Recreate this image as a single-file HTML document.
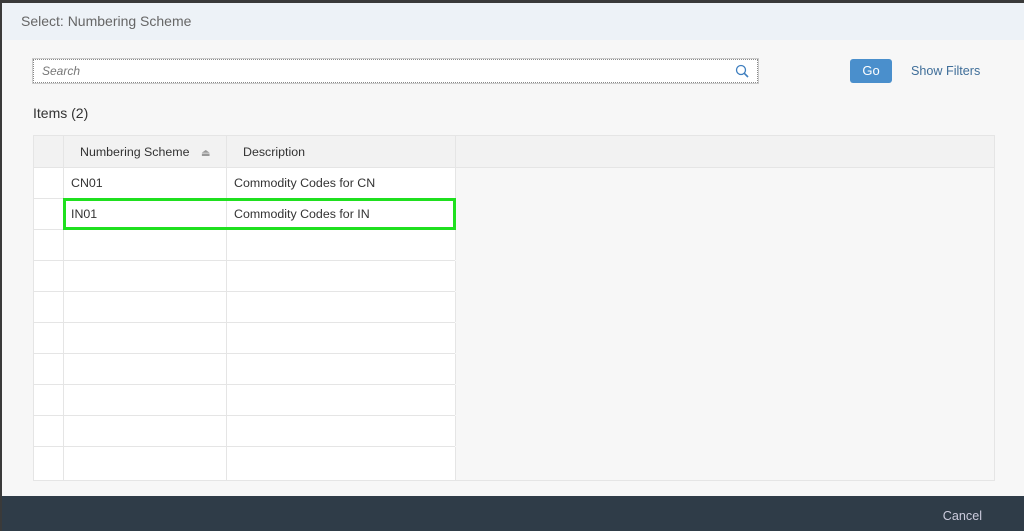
<!DOCTYPE html>
<html><head><style>
*{box-sizing:border-box;margin:0;padding:0}
body{width:1024px;height:531px;background:#3a3a3a;font-family:"Liberation Sans",sans-serif;position:relative;overflow:hidden}
.dlg{position:absolute;left:2px;top:3px;right:0;bottom:0;background:#f7f7f7}
.hdr{position:absolute;left:0;top:0;right:0;height:37px;background:#edf2f7;color:#666;font-size:14px;line-height:37px;padding-left:19px}
.search{position:absolute;left:31px;top:56px;width:725px;height:24px;background:#fff;border:1px dotted #888;outline:1px solid #ccc}
.search span{position:absolute;left:8px;top:4px;font-size:12px;font-style:italic;color:#777}
.go{position:absolute;left:848px;top:56px;width:42px;height:24px;background:#4a8fcc;border-radius:3px;color:#fff;font-size:13px;text-align:center;line-height:24px}
.sf{position:absolute;left:909px;top:61px;color:#3f6e99;font-size:12.6px}
.items{position:absolute;left:31px;top:102px;font-size:14px;color:#333}
.tbl{position:absolute;left:31px;top:132px;width:962px;height:346px;border:1px solid #e5e5e5;background:#f7f7f7}
.row{position:absolute;left:0;height:31px;width:421px;background:#fff;border-bottom:1px solid #e5e5e5;font-size:12.4px;color:#333}
.c{position:absolute;top:0;height:100%;border-right:1px solid #e5e5e5;line-height:31px;padding-left:7px}
.thd{position:absolute;left:0;top:0;width:960px;height:32px;background:#f2f2f2;border-bottom:1px solid #e5e5e5;font-size:12.4px;color:#333}
.foot{position:absolute;left:0;right:0;bottom:0;height:35px;background:#2f3c48;color:#ccd;font-size:12.6px}
.green{position:absolute;left:63px;top:198px;width:393px;height:32px;border:3px solid #1fe01f}
</style></head><body>
<div class="dlg">
<div class="hdr">Select: Numbering Scheme</div>
<div class="search"><span>Search</span>
<svg style="position:absolute;right:8px;top:4px" width="14" height="14" viewBox="0 0 14 14"><circle cx="6" cy="6" r="4.5" fill="none" stroke="#3f7fbf" stroke-width="1.3"/><path d="M9.3 9.3L13 13" stroke="#3f7fbf" stroke-width="1.6"/></svg></div>
<div class="go">Go</div>
<div class="sf">Show Filters</div>
<div class="items">Items (2)</div>
<div class="tbl">
<div class="thd">
<div class="c" style="left:0;width:30px"></div>
<div class="c" style="left:30px;width:163px;padding-left:16px;line-height:32px">Numbering Scheme <span style="margin-left:8px;color:#999;font-size:10px">&#9167;</span></div>
<div class="c" style="left:193px;width:229px;padding-left:16px;line-height:32px">Description</div>
</div>
<div class="row" style="top:32px"><div class="c" style="left:0;width:30px"></div><div class="c" style="left:30px;width:163px">CN01</div><div class="c" style="left:193px;width:229px">Commodity Codes for CN</div></div>
<div class="row" style="top:63px"><div class="c" style="left:0;width:30px"></div><div class="c" style="left:30px;width:163px">IN01</div><div class="c" style="left:193px;width:229px">Commodity Codes for IN</div></div>
<div class="row" style="top:94px"><div class="c" style="left:0;width:30px"></div><div class="c" style="left:30px;width:163px"></div><div class="c" style="left:193px;width:229px"></div></div>
<div class="row" style="top:125px"><div class="c" style="left:0;width:30px"></div><div class="c" style="left:30px;width:163px"></div><div class="c" style="left:193px;width:229px"></div></div>
<div class="row" style="top:156px"><div class="c" style="left:0;width:30px"></div><div class="c" style="left:30px;width:163px"></div><div class="c" style="left:193px;width:229px"></div></div>
<div class="row" style="top:187px"><div class="c" style="left:0;width:30px"></div><div class="c" style="left:30px;width:163px"></div><div class="c" style="left:193px;width:229px"></div></div>
<div class="row" style="top:218px"><div class="c" style="left:0;width:30px"></div><div class="c" style="left:30px;width:163px"></div><div class="c" style="left:193px;width:229px"></div></div>
<div class="row" style="top:249px"><div class="c" style="left:0;width:30px"></div><div class="c" style="left:30px;width:163px"></div><div class="c" style="left:193px;width:229px"></div></div>
<div class="row" style="top:280px"><div class="c" style="left:0;width:30px"></div><div class="c" style="left:30px;width:163px"></div><div class="c" style="left:193px;width:229px"></div></div>
<div class="row" style="top:311px;height:33px;border-bottom:none"><div class="c" style="left:0;width:30px"></div><div class="c" style="left:30px;width:163px"></div><div class="c" style="left:193px;width:229px"></div></div>
</div>
<div class="foot"><span style="position:absolute;right:42px;top:13px">Cancel</span></div>
</div>
<div class="green"></div>
</body></html>
